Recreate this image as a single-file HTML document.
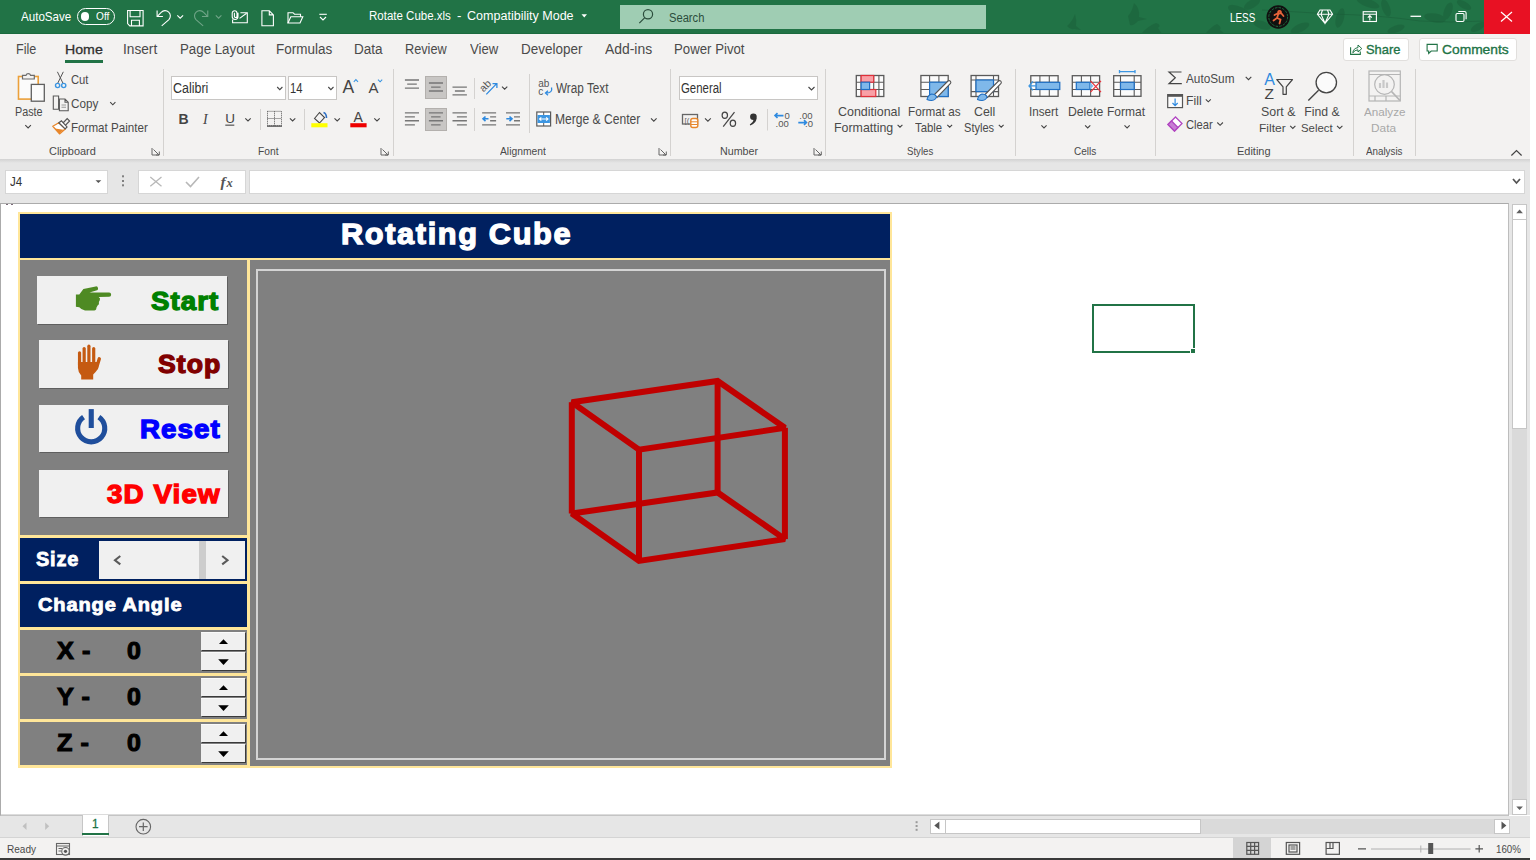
<!DOCTYPE html>
<html><head><meta charset="utf-8">
<style>
*{margin:0;padding:0;box-sizing:border-box}
html,body{width:1536px;height:860px;overflow:hidden;background:#fff;font-family:"Liberation Sans",sans-serif}
.a{position:absolute}
#title{left:0;top:0;width:1530px;height:34px;background:#217346}
#tabs{left:0;top:34px;width:1530px;height:30px;background:#f3f2f1}
#ribbon{left:0;top:64px;width:1530px;height:95px;background:#f3f2f1}
#fbar{left:0;top:159px;width:1530px;height:45px;background:#e6e6e6}
#sheet{left:0;top:203px;width:1509px;height:613px;background:#fff;border:1px solid #ababab;border-right-color:#bdbdbd;border-bottom-color:#c4c4c4;box-shadow:inset 0 -1px 0 #dcdcdc}
#tabbar{left:0;top:816px;width:1530px;height:22px;background:#e6e6e6;border-bottom:1px solid #d4d4d4}
#status{left:0;top:838px;width:1530px;height:20px;background:#f3f2f1}
#bottomline{left:0;top:858px;width:1530px;height:2px;background:#3a3a3a}
.sep{width:1px;background:#d4d2d0}
.gold{background:#ffe699}
.navy{background:#002060}
.gray{background:#808080}
.btn{background:#f0f0f0;box-shadow:1px 1px 0 #5f5f5f}
.bt{font-weight:bold;font-size:25px;white-space:nowrap;line-height:1}
.tx{transform-origin:0 0;line-height:1;white-space:nowrap}
.spin{background:#f0f0f0;box-shadow:1px 1px 0 #3a3a3a;border-top:1px solid #fafafa}
</style></head><body>
<div id="title" class="a"></div>
<svg class="a" style="left:0;top:0" width="1536" height="34">
<g fill="#1a5c37" opacity="0.45">
<path d="M1067,26 Q1072,22 1075,14 Q1077,20 1076,26 L1081,30 L1074,29 Q1070,30 1067,26 Z"/>
<path d="M1128,16 Q1132,12 1134,3 Q1140,8 1139,17 L1147,19 L1138,21 Q1134,26 1130,25 Z"/>
<path d="M1142,33 Q1148,26 1156,23 Q1162,25 1158,28 L1162,34 Z"/>
<path d="M1206,33 Q1212,26 1217,24 Q1222,27 1220,30 L1225,34 Z"/>
<ellipse cx="1240" cy="12" rx="13" ry="5" transform="rotate(25 1240 12)"/>
<ellipse cx="1252" cy="4" rx="9" ry="4" transform="rotate(-30 1252 4)"/>
<ellipse cx="1262" cy="25" rx="9" ry="4" transform="rotate(20 1262 25)"/>
<ellipse cx="1300" cy="28" rx="10" ry="4" transform="rotate(-25 1300 28)"/>
<ellipse cx="1340" cy="18" rx="4" ry="10" transform="rotate(15 1340 18)"/>
<ellipse cx="1368" cy="3" rx="12" ry="4" transform="rotate(20 1368 3)"/>
<ellipse cx="1386" cy="8" rx="4" ry="9" transform="rotate(-20 1386 8)"/>
<ellipse cx="1435" cy="18" rx="11" ry="4.5" transform="rotate(10 1435 18)"/>
<ellipse cx="1448" cy="11" rx="4" ry="9" transform="rotate(20 1448 11)"/>
<ellipse cx="1464" cy="5" rx="8" ry="3.5" transform="rotate(30 1464 5)"/>
<ellipse cx="1478" cy="27" rx="8" ry="3.5" transform="rotate(-30 1478 27)"/>
<ellipse cx="1396" cy="29" rx="9" ry="3.5" transform="rotate(-20 1396 29)"/>
</g>
<path d="M1262,10 Q1300,12 1330,14 Q1380,15 1420,21 Q1450,23 1484,21" fill="none" stroke="#1a5c37" stroke-width="1" opacity="0.5"/>
</svg>
<div id="tabs" class="a"></div>
<div id="ribbon" class="a"></div>
<div id="fbar" class="a"></div>
<div id="sheet" class="a"></div>
<div id="tabbar" class="a"></div>
<div id="status" class="a"></div>
<div id="bottomline" class="a"></div>

<!-- CHROME -->
<div class="a" style="left:0;top:33px;width:1484px;height:1px;background:#1b6a3e"></div>
<div class="a" style="left:1484px;top:0;width:46px;height:34px;background:#e81123"></div>
<div class="a" style="left:620px;top:5px;width:366px;height:24px;background:#9fcdb3"></div>
<div class="a" style="left:77px;top:8px;width:38px;height:16.5px;border:1px solid #fff;border-radius:9px"></div>
<div class="a" style="left:80.7px;top:12.1px;width:8.6px;height:8.6px;background:#fff;border-radius:50%"></div>
<div class="a" style="left:65px;top:60px;width:38px;height:3px;background:#217346"></div>
<div class="a" style="left:1343px;top:38px;width:66px;height:23px;background:#fff;border:1px solid #e1dfdd;border-radius:3px"></div>
<div class="a" style="left:1419px;top:38px;width:98px;height:23px;background:#fff;border:1px solid #e1dfdd;border-radius:3px"></div>
<!-- ribbon boxes -->
<div class="a" style="left:171px;top:76px;width:115px;height:24px;background:#fff;border:1px solid #c8c6c4"></div>
<div class="a" style="left:288px;top:76px;width:49px;height:24px;background:#fff;border:1px solid #c8c6c4"></div>
<div class="a" style="left:679px;top:76px;width:139px;height:24px;background:#fff;border:1px solid #c8c6c4"></div>
<div class="a" style="left:425px;top:76px;width:22px;height:23px;background:#c8c6c4;border:1px solid #b3b0ad"></div>
<div class="a" style="left:425px;top:108px;width:22px;height:23px;background:#c8c6c4;border:1px solid #b3b0ad"></div>
<!-- separators -->
<div class="a sep" style="left:163px;top:69px;height:87px"></div>
<div class="a sep" style="left:393px;top:69px;height:87px"></div>
<div class="a sep" style="left:670px;top:69px;height:87px"></div>
<div class="a sep" style="left:825px;top:69px;height:87px"></div>
<div class="a sep" style="left:1015px;top:69px;height:87px"></div>
<div class="a sep" style="left:1155px;top:69px;height:87px"></div>
<div class="a sep" style="left:1353px;top:69px;height:87px"></div>
<div class="a sep" style="left:1415px;top:69px;height:87px"></div>
<div class="a sep" style="left:260px;top:109px;height:21px"></div>
<div class="a sep" style="left:304px;top:109px;height:21px"></div>
<div class="a sep" style="left:474px;top:78px;height:21px"></div>
<div class="a sep" style="left:474px;top:108px;height:23px"></div>
<div class="a sep" style="left:529px;top:74px;height:59px"></div>
<div class="a sep" style="left:767px;top:109px;height:21px"></div>
<!-- ribbon shadow -->
<div class="a" style="left:0;top:159px;width:1530px;height:4px;background:linear-gradient(#d2d2d2,#e6e6e6)"></div>
<!-- formula bar -->
<div class="a" style="left:5px;top:170px;width:103px;height:24px;background:#fff;border:1px solid #d6d6d6"></div>
<div class="a" style="left:138px;top:170px;width:108px;height:24px;background:#fff;border:1px solid #d6d6d6"></div>
<div class="a" style="left:249px;top:170px;width:1276px;height:24px;background:#fff;border:1px solid #d6d6d6"></div>
<!-- scrollbars -->
<div class="a" style="left:1509px;top:204px;width:21px;height:611px;background:#e6e6e6"></div>
<div class="a" style="left:1512px;top:204px;width:15px;height:611px;background:#dadada"></div>
<div class="a" style="left:1512px;top:204px;width:15px;height:16px;background:#fff;border:1px solid #c6c6c6"></div>
<div class="a" style="left:1512px;top:219px;width:15px;height:210px;background:#fff;border:1px solid #c6c6c6"></div>
<div class="a" style="left:1513px;top:429px;width:13px;height:370px;background:#dadada"></div>
<div class="a" style="left:1512px;top:799px;width:15px;height:16px;background:#fff;border:1px solid #c6c6c6"></div>
<div class="a" style="left:930px;top:819px;width:580px;height:15px;background:#dadada"></div>
<div class="a" style="left:930px;top:819px;width:16px;height:15px;background:#fff;border:1px solid #c6c6c6"></div>
<div class="a" style="left:945px;top:819px;width:256px;height:15px;background:#fff;border:1px solid #c6c6c6"></div>
<div class="a" style="left:1494px;top:819px;width:16px;height:15px;background:#fff;border:1px solid #c6c6c6"></div>
<!-- sheet tab -->
<div class="a" style="left:82px;top:815px;width:27px;height:21px;background:#fff;border-left:1px solid #c6c6c6;border-right:1px solid #c6c6c6"></div>
<div class="a" style="left:82px;top:833px;width:27px;height:2px;background:#217346"></div>
<div class="a" style="left:1233px;top:838px;width:38px;height:20px;background:#d4d4d4"></div>
<svg class="a" style="left:0;top:0" width="1536" height="200">
<g fill="none" stroke="#fff" stroke-width="1.1">
<!-- save -->
<path d="M127.6,10.5 H143.1 V25.9 H129.8 L127.6,23.6 Z"/>
<path d="M130.1,10.5 V16.7 H140 V10.5"/>
<path d="M131.5,25.9 V20.3 H139.4 V25.9"/>
<!-- undo -->
<path d="M157.1,10.4 V16.5 H162.9"/>
<path d="M157.3,16.3 L161.2,12.3 A5.3,5.3 0 0 1 168.9,19.6 L161.7,25.9"/>
<path d="M177.3,15.3 L180.2,18.2 L183.1,15.3"/>
<!-- email attach -->
<path d="M232.6,19.4 V22.7 H247.3 V12.7 H240.4"/>
<path d="M239.6,18.4 L246.6,13.2"/>
<path d="M238,12.8 V16.6 A2.9,2.9 0 0 1 232.2,16.6 V13.2 A2.4,2.4 0 0 1 237,13.2 V16.2 A1.3,1.3 0 0 1 234.4,16.2 V12.8"/>
<!-- new doc -->
<path d="M261.9,10.8 H269.3 L273.4,14.9 V25.7 H261.9 Z M269.3,10.8 V14.9 H273.4"/>
<!-- folder -->
<path d="M288,23 V12.7 H293 L294.5,14.2 H300.5 V16.8"/>
<path d="M288,23 L290.8,16.8 H302.8 L300,23 Z"/>
<!-- customize -->
<path d="M319.3,14.3 H326.8"/>
<path d="M320,17 L323,20 L326,17"/>
<!-- minimize / restore / close -->
<path d="M1410.5,16.3 H1421.1" stroke-width="1.3"/>
<rect x="1456" y="13.5" width="8" height="8" rx="1.2"/>
<path d="M1458.3,11.5 H1464.5 A1.6,1.6 0 0 1 1466.1,13.1 V19.3"/>
<path d="M1501,12 L1512,21.5 M1512,12 L1501,21.5" stroke-width="1.2"/>
<!-- ribbon display -->
<rect x="1363.2" y="11.7" width="13.2" height="9.8"/>
<path d="M1363.2,14.2 H1376.4 M1369.8,20.5 V15.8 M1367.8,17.6 L1369.8,15.6 L1371.8,17.6"/>
<!-- diamond -->
<path d="M1320,10 H1330 L1332.6,14.3 L1325,23.3 L1317.4,14.3 Z M1317.4,14.3 H1332.6 M1322.5,10 L1321,14.3 L1325,23.3 L1329,14.3 L1327.5,10"/>
</g>
<g fill="none" stroke="#fff" stroke-width="1.1" opacity="0.35">
<path d="M207.75,10.4 V16.5 H201.95"/>
<path d="M207.55,16.3 L203.65,12.3 A5.3,5.3 0 0 0 195.95,19.6 L203.15,25.9"/>
<path d="M215.8,15.3 L218.6,18.1 L221.4,15.3"/>
</g>
<path d="M581.5,14.2 H587 L584.25,17.4 Z" fill="#fff"/>
<g fill="none" stroke="#2b4d3c" stroke-width="1.2">
<circle cx="648" cy="14.2" r="4.6"/><path d="M644.6,17.8 L639.3,23.2"/>
</g>
<!-- avatar -->
<circle cx="1278.2" cy="17" r="11.7" fill="#101010"/>
<circle cx="1278.2" cy="17" r="9.4" fill="none" stroke="#1f7a44" stroke-width="0.9" stroke-dasharray="2.5 1.2"/>
<path d="M1279.5,10.8 a1.4,1.4 0 1 0 0.1,0 Z M1277.5,13.5 L1281,13 L1283.5,16 M1278.5,13.5 L1277,18 L1273.5,20.5 M1277,18 L1280.5,19.5 L1279.5,23.5 M1277.5,13.5 L1274.5,15" fill="none" stroke="#e8643a" stroke-width="1.8" stroke-linecap="round"/>
</svg>
<svg class="a" style="left:0;top:0" width="1536" height="200">
<!-- Clipboard -->
<rect x="18.5" y="76.5" width="19.7" height="22.6" fill="#fbfbfb" stroke="#eca03a" stroke-width="1.6"/>
<path d="M22.5,79 V75.3 H26 A2.4,2.4 0 0 1 30.6,75.3 H34.3 V79 Z" fill="#f3f2f1" stroke="#6b6b6b" stroke-width="1.2"/>
<rect x="31.3" y="84.4" width="13" height="16.8" fill="#fbfbfb" stroke="#5f5f5f" stroke-width="1.3"/>
<g fill="none" stroke="#444" stroke-width="1.1">
<path d="M25.3,125.2 L28.1,128 L30.9,125.2"/>
<path d="M110.2,102.2 L112.8,104.8 L115.4,102.2"/>
<path d="M57.4,71.8 L63,83.3 M63.3,71.8 L57.7,83.3" stroke="#555" stroke-width="1"/>
<path d="M53.3,96 H58.6 V109.3 H53.3 Z" stroke="#5a5a5a"/>
<path d="M59.4,99 H65 L68.2,102.2 V110.8 H59.4 Z M65,99 V102.2 H68.2" fill="#f3f2f1" stroke="#5a5a5a"/>
<path d="M61.5,105 H66 M61.5,107.2 H66" stroke="#999"/>
</g>
<g fill="none" stroke="#3c96e2" stroke-width="1.4"><circle cx="57.6" cy="85.5" r="2.1"/><circle cx="63.7" cy="85.5" r="2.1"/></g>
<path d="M52.8,126.3 L58.8,122.8 L65.2,128.9 L59.5,133.9 Z" fill="#fff" stroke="#e8862a" stroke-width="1.3" stroke-linejoin="round"/>
<path d="M54.8,128.6 L63.6,129.8 L59.5,133.6 Z" fill="#e8862a"/>
<path d="M62.5,123.5 L67.2,118.6 L69.6,121 L64.8,125.8 Z" fill="#f3f2f1" stroke="#555" stroke-width="1.2"/>
<path d="M58.8,122.8 L61.4,120.9 L67,126.9 L65.2,128.9 Z" fill="#fff" stroke="#555" stroke-width="1.2"/>
<path d="M152,148 V155 H159 M153.5,149.5 L159,155 M156,155 H159.3 V151.5" fill="none" stroke="#666" stroke-width="1"/>
<!-- Font -->
<g fill="none" stroke="#444" stroke-width="1.1">
<path d="M277.2,87 L279.8,89.6 L282.4,87"/>
<path d="M328.3,87 L330.9,89.6 L333.5,87"/>
<path d="M245.3,118.3 L248,121 L250.7,118.3"/>
<path d="M289.9,118.3 L292.6,121 L295.3,118.3"/>
<path d="M334.5,118.3 L337.2,121 L339.9,118.3"/>
<path d="M374.3,118.3 L377,121 L379.7,118.3"/>
<path d="M381,148 V155 H388 M382.5,149.5 L388,155 M385,155 H388.3 V151.5" stroke="#666" stroke-width="1"/>
</g>
<text x="342.5" y="93" font-size="17.5" fill="#444" font-family="Liberation Sans">A</text>
<text x="368.5" y="93" font-size="15" fill="#444" font-family="Liberation Sans">A</text>
<path d="M353.8,81.8 L355.9,79.6 L358,81.8" fill="none" stroke="#3c96e2" stroke-width="1.1"/>
<path d="M378,79.6 L380.1,81.8 L382.2,79.6" fill="none" stroke="#3c96e2" stroke-width="1.1"/>
<text x="178.5" y="123.5" font-size="14" font-weight="bold" fill="#444" font-family="Liberation Sans">B</text>
<text x="203" y="123.5" font-size="14" font-style="italic" fill="#444" font-family="Liberation Serif">I</text>
<text x="225.2" y="123" font-size="13.5" fill="#444" font-family="Liberation Sans">U</text>
<rect x="225.3" y="124.6" width="9" height="1.1" fill="#444"/>
<g fill="none" stroke="#555" stroke-width="1">
<rect x="267.5" y="111.3" width="14" height="14.5" stroke-dasharray="1 1"/>
<path d="M274.5,111.3 V126 M267.5,118.5 H281.5" stroke-dasharray="1 1"/>
</g>
<rect x="267" y="125.3" width="15" height="1.6" fill="#666"/>
<path d="M314.5,118.5 L319.5,112.5 L324.5,117.5 L319.5,123 Z" fill="none" stroke="#444" stroke-width="1.1"/>
<path d="M323.5,112.5 Q326.5,113.5 326.5,118" fill="none" stroke="#2d6ec4" stroke-width="1.6"/>
<rect x="311.3" y="123.2" width="16.2" height="4.1" fill="#ffff00"/>
<text x="353.5" y="122" font-size="14" fill="#444" font-family="Liberation Sans">A</text>
<rect x="350.3" y="123.2" width="16.3" height="4.1" fill="#ee0000"/>
<!-- Alignment -->
<g stroke="#767676" stroke-width="1.4">
<path d="M404.9,80 H419 M407.2,84.1 H416.8 M404.9,88.1 H419"/>
<path d="M428.9,83 H443 M431.1,87.1 H440.6 M428.9,91 H443"/>
<path d="M452.5,87.1 H466.9 M454.9,91 H464.8 M452.5,94.9 H466.9"/>
<path d="M404.9,112.9 H419 M404.9,116.9 H414.9 M404.9,120.8 H419 M404.9,124.9 H414.9"/>
<path d="M428.9,112.9 H443 M431.1,116.9 H440.6 M428.9,120.8 H443 M431.1,124.9 H440.6"/>
<path d="M452.5,112.9 H466.9 M456.9,116.9 H466.9 M452.5,120.8 H466.9 M456.9,124.9 H466.9"/>
<path d="M482.1,112.9 H496.1 M490.1,116.9 H496.1 M490.1,120.8 H496.1 M482.1,124.9 H496.1"/>
<path d="M506,112.9 H520 M514,116.9 H520 M514,120.8 H520 M506,124.9 H520"/>
</g>
<path d="M488.5,118.8 H483 M485.5,116.5 L483,118.8 L485.5,121.1" fill="none" stroke="#2e8ae0" stroke-width="1.6"/>
<path d="M506.3,118.8 H512 M509.5,116.5 L512,118.8 L509.5,121.1" fill="none" stroke="#2e8ae0" stroke-width="1.6"/>
<text x="0" y="0" font-size="10.5" fill="#555" font-family="Liberation Sans" transform="translate(483.5,92.5) rotate(-45)">ab</text>
<path d="M486.3,94.4 L496.9,83.4 M492.5,83.6 H496.9 V88" fill="none" stroke="#2e8ae0" stroke-width="1.3"/>
<path d="M502,86.6 L504.65,89.2 L507.3,86.6" fill="none" stroke="#444" stroke-width="1.1"/>
<text x="538.3" y="87" font-size="10" fill="#555" font-family="Liberation Sans">ab</text>
<text x="538.3" y="95" font-size="10" fill="#555" font-family="Liberation Sans">c</text>
<path d="M551.5,87.5 Q553,93 545.8,93 M548,90.8 L545.5,93 L548,95.2" fill="none" stroke="#2e8ae0" stroke-width="1.3"/>
<rect x="536.8" y="112" width="13.8" height="14" fill="#fff" stroke="#5a5a5a" stroke-width="1.2"/>
<rect x="537.5" y="115" width="12.4" height="8" fill="#3c96e2"/>
<path d="M543.7,112 V115 M543.7,123 V126" stroke="#5a5a5a" stroke-width="1"/>
<path d="M539.5,119 H548 M541.3,117.3 L539.5,119 L541.3,120.7 M546.2,117.3 L548,119 L546.2,120.7" fill="none" stroke="#fff" stroke-width="1.1"/>
<path d="M651,118.3 L653.8,121.1 L656.6,118.3" fill="none" stroke="#444" stroke-width="1.1"/>
<path d="M659,148 V155 H666 M660.5,149.5 L666,155 M663,155 H666.3 V151.5" fill="none" stroke="#666" stroke-width="1"/>
<!-- Number -->
<path d="M808.5,87 L811.5,90 L814.5,87" fill="none" stroke="#444" stroke-width="1.1"/>
<rect x="682.5" y="114.5" width="15" height="9.5" fill="#f3f2f1" stroke="#666" stroke-width="1.3"/>
<text x="684.5" y="122.5" font-size="8" fill="#666" font-family="Liberation Sans">[(</text>
<rect x="690.8" y="118.5" width="7" height="9" rx="2" fill="#fff" stroke="#e8862a" stroke-width="1.4"/>
<path d="M691,121.8 H697.5 M691,124.5 H697.5" stroke="#e8862a" stroke-width="1"/>
<path d="M705,118.3 L707.9,121.2 L710.8,118.3" fill="none" stroke="#444" stroke-width="1.1"/>
<g fill="none" stroke="#444" stroke-width="1.2"><ellipse cx="724.8" cy="115.3" rx="2.7" ry="3.1"/><ellipse cx="732.9" cy="123.2" rx="2.7" ry="3.1"/><path d="M734.5,112.2 L723.2,126.6"/></g>
<circle cx="753.4" cy="116.8" r="3.3" fill="#333"/><path d="M756.6,117.5 Q756.8,123 750.3,125.6 L749.8,124.5 Q753.3,122.5 753.6,119.8 Z" fill="#333"/>
<rect x="767" y="109.5" width="1" height="21" fill="#d4d2d0"/>
<path d="M783.5,115.6 H775 M777.5,113.2 L775,115.6 L777.5,118" fill="none" stroke="#2e8ae0" stroke-width="1.6"/>
<text x="784.5" y="118.8" font-size="9.5" fill="#555" font-family="Liberation Sans">0</text>
<text x="775.5" y="126.8" font-size="9.5" fill="#555" font-family="Liberation Sans">.00</text>
<text x="799.3" y="118.8" font-size="9.5" fill="#555" font-family="Liberation Sans">.00</text>
<path d="M798.3,122.6 H806.5 M804,120.2 L806.5,122.6 L804,125" fill="none" stroke="#2e8ae0" stroke-width="1.6"/>
<text x="805" y="126.8" font-size="9.5" fill="#555" font-family="Liberation Sans">.0</text>
<path d="M814,148 V155 H821 M815.5,149.5 L821,155 M818,155 H821.3 V151.5" fill="none" stroke="#666" stroke-width="1"/>
</svg>
<svg class="a" style="left:0;top:0" width="1536" height="200">
<!-- Styles -->
<g stroke="#5a5a5a" stroke-width="1.3" fill="#fbfbfb">
<rect x="856.3" y="75.5" width="27.5" height="21"/>
<rect x="920.9" y="75.5" width="27.3" height="21"/>
<rect x="971.1" y="75.5" width="27.4" height="21"/>
<rect x="1030.8" y="75.7" width="27.3" height="20.6"/>
<rect x="1072.3" y="75.7" width="27.3" height="20.6"/>
<rect x="1113.7" y="75.7" width="27.3" height="20.6"/>
</g>
<g stroke="#5a5a5a" stroke-width="1.1" fill="none">
<path d="M861.1,75.5 V96.5 M873.7,75.5 V96.5 M878.9,75.5 V96.5 M856.3,82.2 H883.8 M856.3,89.5 H883.8"/>
<path d="M929.6,75.5 V96.5 M938.9,75.5 V96.5 M920.9,82.2 H948.2 M920.9,89.5 H948.2"/>
<path d="M976,75.5 V96.5 M993.5,75.5 V96.5 M971.1,80 H998.5 M971.1,91.6 H998.5"/>
<path d="M1039.9,75.7 V96.3 M1049.3,75.7 V96.3 M1030.8,82.3 H1058.1 M1030.8,89.5 H1058.1"/>
<path d="M1081.4,75.7 V96.3 M1090.6,75.7 V96.3 M1072.3,82.3 H1099.6 M1072.3,89.5 H1099.6"/>
<path d="M1120.5,75.7 V96.3 M1134.2,75.7 V96.3 M1113.7,82.3 H1141 M1113.7,89.5 H1141"/>
</g>
<g stroke="#e0303a" stroke-width="1.2" fill="#f9a0a6">
<rect x="861.1" y="75.5" width="12.6" height="6.7"/><rect x="861.1" y="89.5" width="14.7" height="7"/>
</g>
<g stroke="#1f6fc4" stroke-width="1.2" fill="#7fb8ea">
<rect x="861.1" y="82.2" width="8.5" height="7.3"/>
<rect x="929.6" y="82.2" width="18.6" height="14.3"/>
<rect x="976" y="80" width="17.5" height="11.6"/>
<rect x="1036" y="82.3" width="23.8" height="7.2"/>
<rect x="1076.3" y="82.3" width="13.5" height="7.2"/>
<rect x="1120.5" y="82.3" width="13.7" height="7.2"/>
</g>
<g stroke="#3c96e2" stroke-width="1.3" fill="none">
<path d="M1037,85.9 H1030 M1033,81.5 L1029,85.9 L1033,90.3"/>
<path d="M1119.5,71.6 H1135 M1119.5,70 V73.2 M1135,70 V73.2"/>
</g>
<path d="M1089.8,82.3 L1093.5,85.9 L1089.8,89.5 Z" fill="#7fb8ea"/>
<path d="M1090.5,80.8 L1101,92.2 M1101,80.8 L1090.5,92.2" stroke="#e8303a" stroke-width="1.2"/>
<g>
<path d="M934,95 L948,81 A1.8,1.8 0 0 1 950.5,83.5 L937,97.5 Z" fill="#fff" stroke="#555" stroke-width="1.1"/>
<path d="M927,99.5 Q928,95 931.5,94 Q935,94 936.5,96.5 Q936,100 931.5,100.5 Q929,100.5 927,99.5 Z" fill="#7fb8ea" stroke="#1f6fc4" stroke-width="1.1"/>
<path d="M984.5,95 L998.5,81 A1.8,1.8 0 0 1 1001,83.5 L987.5,97.5 Z" fill="#fff" stroke="#555" stroke-width="1.1"/>
<path d="M977.5,99.5 Q978.5,95 982,94 Q985.5,94 987,96.5 Q986.5,100 982,100.5 Q979.5,100.5 977.5,99.5 Z" fill="#7fb8ea" stroke="#1f6fc4" stroke-width="1.1"/>
</g>
<g fill="none" stroke="#444" stroke-width="1.1">
<path d="M897.6,124.8 L900,127.2 L902.4,124.8"/>
<path d="M947.3,124.8 L949.7,127.2 L952.1,124.8"/>
<path d="M998.8,124.8 L1001.2,127.2 L1003.6,124.8"/>
<path d="M1041.4,125.3 L1044,127.9 L1046.6,125.3"/>
<path d="M1085.1,125.3 L1087.7,127.9 L1090.3,125.3"/>
<path d="M1124.5,125.3 L1127.1,127.9 L1129.7,125.3"/>
<!-- editing chevrons -->
<path d="M1245.7,76.8 L1248.5,79.6 L1251.3,76.8"/>
<path d="M1205.8,99.3 L1208.3,101.8 L1210.8,99.3"/>
<path d="M1217.3,122.5 L1220.1,125.3 L1222.9,122.5"/>
<path d="M1290.2,125.9 L1292.8,128.5 L1295.4,125.9"/>
<path d="M1337,125.9 L1339.7,128.5 L1342.4,125.9"/>
<path d="M1511.4,155.5 L1516.5,150.5 L1521.6,155.5" stroke-width="1.2"/>
</g>
<path d="M1181.5,72 H1169 L1175.3,77.7 L1169,83.7 H1181.8" fill="none" stroke="#444" stroke-width="1.2"/>
<rect x="1167.7" y="94.6" width="14.8" height="13" fill="#fbfbfb" stroke="#555" stroke-width="1.2"/>
<rect x="1167.7" y="94.6" width="14.8" height="2.2" fill="#555"/>
<path d="M1175.1,98.5 V105.5 M1172.5,103 L1175.1,105.6 L1177.7,103" fill="none" stroke="#2e8ae0" stroke-width="1.2"/>
<path d="M1168,124.5 L1175.5,117 L1182,123.5 L1174.5,131 Z" fill="#fff" stroke="#b146c2" stroke-width="1.3"/>
<path d="M1168,124.5 L1171.5,121 L1178,127.5 L1174.5,131 Z" fill="#c77fd4" stroke="#b146c2" stroke-width="1.3"/>
<text x="1264.3" y="85.2" font-size="16" fill="#2e8ae0" font-family="Liberation Sans">A</text>
<text x="1264.5" y="98.8" font-size="15.5" fill="#444" font-family="Liberation Sans">Z</text>
<path d="M1276.8,79.5 H1292.5 L1286.3,86.8 V94.3 H1283 V86.8 Z" fill="none" stroke="#444" stroke-width="1.2" stroke-linejoin="round"/>
<circle cx="1326.3" cy="82.6" r="10.2" fill="#fbfbfb" stroke="#444" stroke-width="1.3"/>
<path d="M1318.6,90.3 L1308.3,100.4" stroke="#444" stroke-width="1.4"/>
<!-- Analyze -->
<g fill="none" stroke="#b5b5b5" stroke-width="1.2">
<rect x="1369" y="71" width="31.3" height="30"/>
<path d="M1369,74.5 H1400.3 M1369,96 H1400.3 M1375,96 V101 M1386,96 V101"/>
<circle cx="1384.5" cy="84.5" r="9.8"/>
<path d="M1391.5,91.5 L1400,100.5" stroke-width="1.8"/>
</g>
<path d="M1380,88 V83 M1383.5,88 V80 M1387,88 V82.5" stroke="#c8c8c8" stroke-width="2.2"/>
</svg>
<svg class="a" style="left:0;top:0" width="1536" height="860">
<!-- formula bar -->
<path d="M95.5,180.3 H101.3 L98.4,183 Z" fill="#555"/>
<g fill="#808080"><rect x="122" y="175.3" width="2" height="2"/><rect x="122" y="180" width="2" height="2"/><rect x="122" y="184.3" width="2" height="2"/></g>
<path d="M150.3,177 L161.5,186.2 M161.5,177 L150.3,186.2" stroke="#b8b8b8" stroke-width="1.3"/>
<path d="M186,182 L190.5,186.6 L199,177" fill="none" stroke="#b8b8b8" stroke-width="1.6"/>
<text x="220.5" y="186.5" font-size="15.5" font-style="italic" font-weight="bold" fill="#555" font-family="Liberation Serif">f</text>
<text x="226.5" y="186.5" font-size="12.5" font-style="italic" font-weight="bold" fill="#555" font-family="Liberation Serif">x</text>
<path d="M1513,179 L1516.5,183 L1520,179" fill="none" stroke="#555" stroke-width="1.8"/>
<!-- share / comments icons -->
<path d="M1350.6,47.3 V54.4 H1360.3 V51.6" fill="none" stroke="#217346" stroke-width="1.1"/>
<path d="M1352.8,52.8 Q1353.2,48.3 1358,47.6 V45 L1361.8,48.6 L1358,52 V49.8 Q1354.8,50 1352.8,52.8 Z" fill="none" stroke="#217346" stroke-width="1" stroke-linejoin="round"/>
<path d="M1427.1,44.4 H1437.2 V51 H1431.2 L1428.7,53.4 V51 H1427.1 Z" fill="none" stroke="#217346" stroke-width="1.1"/>
<!-- vertical scrollbar arrows -->
<path d="M1516.3,213.3 H1522.9 L1519.6,209.6 Z" fill="#606060"/>
<path d="M1516.3,806.5 H1522.9 L1519.6,810 Z" fill="#606060"/>
<!-- horizontal scrollbar -->
<g fill="#9a9a9a"><rect x="915.6" y="821.2" width="2" height="2"/><rect x="915.6" y="825" width="2" height="2"/><rect x="915.6" y="828.8" width="2" height="2"/></g>
<path d="M939.4,821.5 V829.5 L934.3,825.5 Z" fill="#555"/>
<path d="M1501.5,821.5 V829.5 L1506.4,825.5 Z" fill="#555"/>
<!-- sheet nav -->
<path d="M26.5,822.5 V830 L22.5,826.3 Z" fill="#c0c0c0"/>
<path d="M45.2,822.5 V830 L49.2,826.3 Z" fill="#c0c0c0"/>
<circle cx="143.3" cy="826.7" r="7.3" fill="none" stroke="#666" stroke-width="1.1"/>
<path d="M139,826.7 H147.6 M143.3,822.4 V831" stroke="#666" stroke-width="1.2"/>
<!-- status macro icon -->
<rect x="56.5" y="843.5" width="13" height="11" fill="none" stroke="#666" stroke-width="1.1"/>
<path d="M56.5,846 H69.5 M58.5,848.5 H62 M58.5,851 H61" stroke="#666" stroke-width="1.1"/>
<circle cx="65.5" cy="851.3" r="3.8" fill="#f3f2f1" stroke="#666" stroke-width="1.1"/>
<circle cx="65.5" cy="851.3" r="1.6" fill="#555"/>
<!-- view icons -->
<g fill="none" stroke="#555" stroke-width="1.2">
<rect x="1246.8" y="842.5" width="11.8" height="11.8"/>
<path d="M1250.7,842.5 V854.3 M1254.6,842.5 V854.3 M1246.8,846.4 H1258.6 M1246.8,850.3 H1258.6"/>
<rect x="1286.3" y="842.5" width="13.3" height="11.8"/>
<rect x="1289" y="845" width="8" height="7"/>
<path d="M1290.5,847 H1295.5 M1290.5,849 H1295.5"/>
<rect x="1326.1" y="842.5" width="13.3" height="11.8"/>
<path d="M1326.1,848.5 H1333 V842.5 M1330,842.5 V848.5"/>
<path d="M1358,848.8 H1366 M1475.4,848.8 H1483 M1479.2,845 V852.6"/>
</g>
<path d="M1371,849 H1470.6" stroke="#b0b0b0" stroke-width="1"/>
<path d="M1420.8,845.5 V852.5" stroke="#b0b0b0" stroke-width="1"/>
<rect x="1428.2" y="843" width="5" height="11" fill="#555"/>
</svg>
<div class="a" style="left:5.5px;top:203.5px;width:2px;height:1.5px;background:#7a6a78"></div><div class="a" style="left:10.5px;top:203.5px;width:2px;height:1.5px;background:#7a6a78"></div>
<!-- SHEET CONTENT -->
<div class="a gold" style="left:18px;top:212px;width:874px;height:556px"></div>
<div class="a navy" style="left:20px;top:214px;width:870px;height:44px"></div>
<div class="a gray" style="left:20px;top:260px;width:227px;height:275px"></div>
<div class="a gray" style="left:250px;top:260px;width:640px;height:506px"></div>
<div class="a" style="left:256px;top:269px;width:630px;height:491px;border:2px solid #d4d4d4"></div>

<div class="a btn" style="left:37px;top:276px;width:190px;height:48px"></div>
<div class="a btn" style="left:39px;top:340px;width:189px;height:48px"></div>
<div class="a btn" style="left:39px;top:405px;width:189px;height:47px"></div>
<div class="a btn" style="left:39px;top:470px;width:189px;height:47px"></div>


<div class="a navy" style="left:20px;top:538px;width:227px;height:43px"></div>
<div class="a navy" style="left:20px;top:584px;width:227px;height:43px"></div>
<div class="a gray" style="left:20px;top:630px;width:227px;height:43px"></div>
<div class="a gray" style="left:20px;top:676px;width:227px;height:43px"></div>
<div class="a gray" style="left:20px;top:722px;width:227px;height:43px"></div>

<div class="a" style="left:99px;top:541px;width:146px;height:38px;background:#f0f0f0"></div>
<div class="a" style="left:199px;top:541px;width:7px;height:38px;background:#cdcdcd"></div>



<div class="a spin" style="left:201px;top:632px;width:44px;height:18px"></div>
<div class="a spin" style="left:201px;top:652px;width:44px;height:18px"></div>
<div class="a spin" style="left:201px;top:678px;width:44px;height:18px"></div>
<div class="a spin" style="left:201px;top:698px;width:44px;height:18px"></div>
<div class="a spin" style="left:201px;top:724px;width:44px;height:18px"></div>
<div class="a spin" style="left:201px;top:744px;width:44px;height:18px"></div>
<!--TX-->
<div class="a tx" style="left:340.53px;top:219.32px;font-size:30.31px;font-weight:bold;color:#fff;-webkit-text-stroke:1.3px #fff;letter-spacing:1.6px;transform:scaleX(1.0147)">Rotating Cube</div>
<div class="a tx" style="left:151.32px;top:288.16px;font-size:26.31px;font-weight:bold;color:#008000;-webkit-text-stroke:1.3px #008000;letter-spacing:1.0px;transform:scaleX(1.0521)">Start</div>
<div class="a tx" style="left:158.23px;top:352.33px;font-size:25.22px;font-weight:bold;color:#800000;-webkit-text-stroke:1.3px #800000;letter-spacing:1.0px;transform:scaleX(1.0535)">Stop</div>
<div class="a tx" style="left:140.22px;top:416.34px;font-size:26.38px;font-weight:bold;color:#0000ff;-webkit-text-stroke:1.3px #0000ff;letter-spacing:1.0px;transform:scaleX(1.0517)">Reset</div>
<div class="a tx" style="left:107.22px;top:482.08px;font-size:25.51px;font-weight:bold;color:#ff0000;-webkit-text-stroke:1.3px #ff0000;letter-spacing:1.0px;transform:scaleX(1.0888)">3D View</div>
<div class="a tx" style="left:36.09px;top:550.44px;font-size:19.33px;font-weight:bold;color:#fff;-webkit-text-stroke:0.8px #fff;letter-spacing:0.8px;transform:scaleX(1.0298)">Size</div>
<div class="a tx" style="left:37.77px;top:595.73px;font-size:18.10px;font-weight:bold;color:#fff;-webkit-text-stroke:0.8px #fff;letter-spacing:0.8px;transform:scaleX(1.1063)">Change Angle</div>
<div class="a tx" style="left:57.45px;top:639.27px;font-size:24.64px;font-weight:bold;color:#000;-webkit-text-stroke:1.1px #000;letter-spacing:0.5px;transform:scaleX(1.0256)">X -</div>
<div class="a tx" style="left:57.45px;top:685.27px;font-size:24.64px;font-weight:bold;color:#000;-webkit-text-stroke:1.1px #000;letter-spacing:0.5px;transform:scaleX(1.0256)">Y -</div>
<div class="a tx" style="left:57.45px;top:731.27px;font-size:24.64px;font-weight:bold;color:#000;-webkit-text-stroke:1.1px #000;letter-spacing:0.5px;transform:scaleX(1.0256)">Z -</div>
<div class="a tx" style="left:126.77px;top:639.27px;font-size:24.64px;font-weight:bold;color:#000;-webkit-text-stroke:1.1px #000;letter-spacing:0.5px;transform:scaleX(1.0140)">0</div>
<div class="a tx" style="left:126.77px;top:685.27px;font-size:24.64px;font-weight:bold;color:#000;-webkit-text-stroke:1.1px #000;letter-spacing:0.5px;transform:scaleX(1.0140)">0</div>
<div class="a tx" style="left:126.77px;top:731.27px;font-size:24.64px;font-weight:bold;color:#000;-webkit-text-stroke:1.1px #000;letter-spacing:0.5px;transform:scaleX(1.0140)">0</div>
<div class="a tx" style="left:20.80px;top:9.58px;font-size:13.37px;font-weight:normal;color:#fff;transform:scaleX(0.8687)">AutoSave</div>
<div class="a tx" style="left:95.62px;top:11.48px;font-size:11.48px;font-weight:normal;color:#fff;transform:scaleX(0.8832)">Off</div>
<div class="a tx" style="left:368.50px;top:10.12px;font-size:12.50px;font-weight:normal;color:#fff;transform:scaleX(0.9204)">Rotate Cube.xls</div>
<div class="a tx" style="left:456.89px;top:10.12px;font-size:12.50px;font-weight:normal;color:#fff;transform:scaleX(1.0541)">-</div>
<div class="a tx" style="left:467.21px;top:10.12px;font-size:12.50px;font-weight:normal;color:#fff;transform:scaleX(1.0028)">Compatibility Mode</div>
<div class="a tx" style="left:668.55px;top:10.73px;font-size:13.66px;font-weight:normal;color:#2b4d3c;transform:scaleX(0.8172)">Search</div>
<div class="a tx" style="left:1230.33px;top:11.87px;font-size:12.79px;font-weight:normal;color:#fff;transform:scaleX(0.7732)">LESS</div>
<div class="a tx" style="left:16.22px;top:43.31px;font-size:13.81px;font-weight:normal;color:#4a4a4a;transform:scaleX(0.9121)">File</div>
<div class="a tx" style="left:64.94px;top:43.42px;font-size:13.59px;font-weight:normal;color:#303030;-webkit-text-stroke:0.3px #303030;transform:scaleX(1.0422)">Home</div>
<div class="a tx" style="left:123.43px;top:43.31px;font-size:13.81px;font-weight:normal;color:#4a4a4a;transform:scaleX(0.9910)">Insert</div>
<div class="a tx" style="left:179.96px;top:43.31px;font-size:13.81px;font-weight:normal;color:#4a4a4a;transform:scaleX(0.9633)">Page Layout</div>
<div class="a tx" style="left:276.25px;top:43.31px;font-size:13.81px;font-weight:normal;color:#4a4a4a;transform:scaleX(0.9762)">Formulas</div>
<div class="a tx" style="left:353.64px;top:43.31px;font-size:13.81px;font-weight:normal;color:#4a4a4a;transform:scaleX(0.9796)">Data</div>
<div class="a tx" style="left:404.81px;top:43.31px;font-size:13.81px;font-weight:normal;color:#4a4a4a;transform:scaleX(0.9219)">Review</div>
<div class="a tx" style="left:470.40px;top:43.31px;font-size:13.81px;font-weight:normal;color:#4a4a4a;transform:scaleX(0.9498)">View</div>
<div class="a tx" style="left:520.65px;top:43.31px;font-size:13.81px;font-weight:normal;color:#4a4a4a;transform:scaleX(0.9758)">Developer</div>
<div class="a tx" style="left:605.00px;top:43.31px;font-size:13.81px;font-weight:normal;color:#4a4a4a;transform:scaleX(1.0068)">Add-ins</div>
<div class="a tx" style="left:673.57px;top:43.31px;font-size:13.81px;font-weight:normal;color:#4a4a4a;transform:scaleX(0.9581)">Power Pivot</div>
<div class="a tx" style="left:1366.17px;top:43.44px;font-size:13.55px;font-weight:normal;color:#217346;-webkit-text-stroke:0.35px #217346;transform:scaleX(0.9504)">Share</div>
<div class="a tx" style="left:1441.93px;top:43.44px;font-size:13.55px;font-weight:normal;color:#217346;-webkit-text-stroke:0.35px #217346;transform:scaleX(1.0184)">Comments</div>
<div class="a tx" style="left:14.76px;top:105.56px;font-size:12.21px;font-weight:normal;color:#4a4a4a;transform:scaleX(0.8834)">Paste</div>
<div class="a tx" style="left:71.47px;top:74.06px;font-size:12.21px;font-weight:normal;color:#4a4a4a;transform:scaleX(0.9205)">Cut</div>
<div class="a tx" style="left:71.45px;top:97.60px;font-size:11.99px;font-weight:normal;color:#4a4a4a;transform:scaleX(0.9770)">Copy</div>
<div class="a tx" style="left:71.09px;top:122.81px;font-size:11.92px;font-weight:normal;color:#4a4a4a;transform:scaleX(0.9752)">Format Painter</div>
<div class="a tx" style="left:49.19px;top:146.02px;font-size:10.61px;font-weight:normal;color:#4a4a4a;transform:scaleX(1.0311)">Clipboard</div>
<div class="a tx" style="left:173.17px;top:81.79px;font-size:13.95px;font-weight:normal;color:#333;transform:scaleX(0.8941)">Calibri</div>
<div class="a tx" style="left:290.30px;top:81.79px;font-size:13.95px;font-weight:normal;color:#333;transform:scaleX(0.8041)">14</div>
<div class="a tx" style="left:258.40px;top:147.36px;font-size:10.32px;font-weight:normal;color:#4a4a4a;transform:scaleX(0.9960)">Font</div>
<div class="a tx" style="left:555.60px;top:80.57px;font-size:14.68px;font-weight:normal;color:#4a4a4a;transform:scaleX(0.8002)">Wrap Text</div>
<div class="a tx" style="left:554.66px;top:112.07px;font-size:14.68px;font-weight:normal;color:#4a4a4a;transform:scaleX(0.8232)">Merge & Center</div>
<div class="a tx" style="left:499.70px;top:147.36px;font-size:10.32px;font-weight:normal;color:#4a4a4a;transform:scaleX(0.9995)">Alignment</div>
<div class="a tx" style="left:681.17px;top:81.79px;font-size:13.95px;font-weight:normal;color:#333;transform:scaleX(0.8176)">General</div>
<div class="a tx" style="left:720.16px;top:147.36px;font-size:10.32px;font-weight:normal;color:#4a4a4a;transform:scaleX(1.0377)">Number</div>
<div class="a tx" style="left:838.22px;top:105.57px;font-size:12.79px;font-weight:normal;color:#4a4a4a;transform:scaleX(0.9736)">Conditional</div>
<div class="a tx" style="left:834.03px;top:122.07px;font-size:12.79px;font-weight:normal;color:#4a4a4a;transform:scaleX(0.9695)">Formatting</div>
<div class="a tx" style="left:907.59px;top:105.57px;font-size:12.79px;font-weight:normal;color:#4a4a4a;transform:scaleX(0.9151)">Format as</div>
<div class="a tx" style="left:915.02px;top:122.07px;font-size:12.79px;font-weight:normal;color:#4a4a4a;transform:scaleX(0.8875)">Table</div>
<div class="a tx" style="left:974.42px;top:105.57px;font-size:12.79px;font-weight:normal;color:#4a4a4a;transform:scaleX(0.9664)">Cell</div>
<div class="a tx" style="left:963.95px;top:122.07px;font-size:12.79px;font-weight:normal;color:#4a4a4a;transform:scaleX(0.8654)">Styles</div>
<div class="a tx" style="left:906.50px;top:147.36px;font-size:10.32px;font-weight:normal;color:#4a4a4a;transform:scaleX(0.9324)">Styles</div>
<div class="a tx" style="left:1029.39px;top:105.57px;font-size:12.79px;font-weight:normal;color:#4a4a4a;transform:scaleX(0.9119)">Insert</div>
<div class="a tx" style="left:1068.04px;top:105.57px;font-size:12.79px;font-weight:normal;color:#4a4a4a;transform:scaleX(0.9561)">Delete</div>
<div class="a tx" style="left:1107.26px;top:105.57px;font-size:12.79px;font-weight:normal;color:#4a4a4a;transform:scaleX(0.9405)">Format</div>
<div class="a tx" style="left:1073.53px;top:147.36px;font-size:10.32px;font-weight:normal;color:#4a4a4a;transform:scaleX(0.9760)">Cells</div>
<div class="a tx" style="left:1186.20px;top:73.26px;font-size:12.21px;font-weight:normal;color:#4a4a4a;transform:scaleX(0.9660)">AutoSum</div>
<div class="a tx" style="left:1185.74px;top:95.04px;font-size:12.35px;font-weight:normal;color:#4a4a4a;transform:scaleX(0.9927)">Fill</div>
<div class="a tx" style="left:1186.18px;top:118.85px;font-size:12.94px;font-weight:normal;color:#4a4a4a;transform:scaleX(0.8630)">Clear</div>
<div class="a tx" style="left:1260.81px;top:105.76px;font-size:12.21px;font-weight:normal;color:#4a4a4a;transform:scaleX(1.0145)">Sort &</div>
<div class="a tx" style="left:1258.96px;top:121.73px;font-size:11.77px;font-weight:normal;color:#4a4a4a;transform:scaleX(1.0205)">Filter</div>
<div class="a tx" style="left:1304.25px;top:105.76px;font-size:12.21px;font-weight:normal;color:#4a4a4a;transform:scaleX(1.0000)">Find &</div>
<div class="a tx" style="left:1300.94px;top:121.73px;font-size:11.77px;font-weight:normal;color:#4a4a4a;transform:scaleX(0.9662)">Select</div>
<div class="a tx" style="left:1237.14px;top:147.36px;font-size:10.32px;font-weight:normal;color:#4a4a4a;transform:scaleX(1.0640)">Editing</div>
<div class="a tx" style="left:1364.00px;top:106.50px;font-size:11.34px;font-weight:normal;color:#a8a8a8;transform:scaleX(1.0307)">Analyze</div>
<div class="a tx" style="left:1371.47px;top:121.73px;font-size:11.77px;font-weight:normal;color:#a8a8a8;transform:scaleX(1.0073)">Data</div>
<div class="a tx" style="left:1365.60px;top:147.36px;font-size:10.32px;font-weight:normal;color:#4a4a4a;transform:scaleX(0.9500)">Analysis</div>
<div class="a tx" style="left:10.22px;top:174.99px;font-size:13.30px;font-weight:normal;color:#333;transform:scaleX(0.8662)">J4</div>
<div class="a tx" style="left:92.12px;top:817.65px;font-size:12.14px;font-weight:normal;color:#217346;-webkit-text-stroke:0.3px #217346;transform:scaleX(0.9637)">1</div>
<div class="a tx" style="left:6.71px;top:844.96px;font-size:10.32px;font-weight:normal;color:#4a4a4a;transform:scaleX(0.9750)">Ready</div>
<div class="a tx" style="left:1496.39px;top:843.72px;font-size:10.61px;font-weight:normal;color:#4a4a4a;transform:scaleX(0.9175)">160%</div>
<svg class="a" style="left:0;top:0" width="1536" height="860">
<g fill="none" stroke="#c00000" stroke-width="6" stroke-linejoin="miter" stroke-miterlimit="1.5" stroke-linecap="butt">
<polygon points="571.8,402.2 717.6,381 784.9,427.8 639,449.6"/>
<polygon points="571.8,513.5 717.6,492.5 784.9,539.1 639,560.9"/>
<line x1="571.8" y1="402.2" x2="571.8" y2="513.5"/>
<line x1="717.6" y1="381" x2="717.6" y2="492.5"/>
<line x1="784.9" y1="427.8" x2="784.9" y2="539.1"/>
<line x1="639" y1="449.6" x2="639" y2="560.9"/>
</g>
</svg>
<svg class="a" style="left:0;top:0" width="1536" height="860">
<path fill="#4e8a23" d="M75.9,294.6 L79.3,294.6 L83.4,289.1 L95.7,286.4 A2.1,2.1 0 0 1 96.2,290.6 L89.5,292.6 L109.1,292.6 A2.05,2.05 0 0 1 109.1,296.7 L98.7,296.9 Q100.8,298.3 99.8,300.2 Q98.6,302 98.9,302.5 Q99.6,304.5 97.6,305.6 Q96.9,307 96.4,307.8 Q96.4,310.5 94.2,310.5 L85,310.4 Q81.5,310 79.3,307.3 L75.9,306.8 Z"/>
<g stroke="#c55a11" stroke-linecap="round" stroke-width="3.2">
<line x1="79.55" y1="352.8" x2="79.55" y2="365"/>
<line x1="84.15" y1="348.5" x2="84.15" y2="365"/>
<line x1="88.9" y1="346.2" x2="88.9" y2="365"/>
<line x1="93.7" y1="348.5" x2="93.7" y2="365"/>
<line x1="99.3" y1="358.8" x2="96.5" y2="368" stroke-width="3.4"/>
</g>
<path fill="#c55a11" d="M77.95,362 L98,362 L98.3,367 Q97.5,370.5 93.2,374.5 L93.2,379.6 L81.2,379.6 L81.2,375.5 Q78,372 77.95,368 Z"/>
<rect x="88.7" y="409.1" width="5.1" height="18.9" fill="#1f4e9c"/>
<path fill="none" stroke="#1f4e9c" stroke-width="5.1" d="M98.87,417.13 A13.55,13.55 0 1 1 83.53,417.13"/>
<g fill="#000">
<path d="M219,643.9 L223.5,639.2 L228,643.9 Z"/><path d="M218.2,659.3 L228.8,659.3 L223.5,664.9 Z"/>
<path d="M219,689.9 L223.5,685.2 L228,689.9 Z"/><path d="M218.2,705.3 L228.8,705.3 L223.5,710.9 Z"/>
<path d="M219,735.9 L223.5,731.2 L228,735.9 Z"/><path d="M218.2,751.3 L228.8,751.3 L223.5,756.9 Z"/>
</g>
<g fill="none" stroke="#5a5a5a" stroke-width="2.1">
<path d="M120.3,556 L115,560.2 L120.3,564.4"/><path d="M222.2,556 L227.5,560.2 L222.2,564.4"/>
</g>
</svg>
<div class="a" style="left:1092px;top:304px;width:103px;height:49px;border:2px solid #217346"></div>
<div class="a" style="left:1190px;top:348px;width:6px;height:6px;background:#217346;border:1px solid #fff"></div>
</body></html>
